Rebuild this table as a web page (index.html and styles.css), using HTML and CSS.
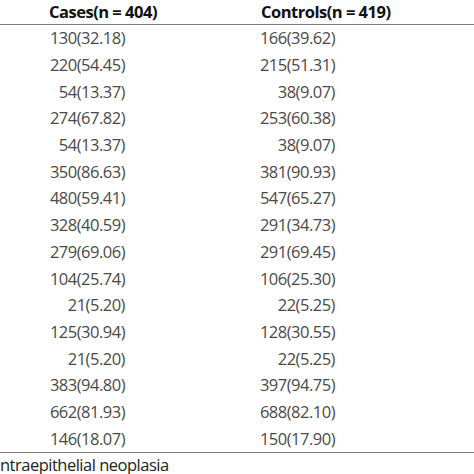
FILE: index.html
```html
<!DOCTYPE html>
<html>
<head>
<meta charset="utf-8">
<link rel="stylesheet" href="styles.css">
</head>
<body>
<div class="table">
  <div class="row head">
    <div class="h1">Cases(n = 404)</div>
    <div class="h2">Controls(n = 419)</div>
  </div>
  <div class="body">
    <div class="row"><div class="c1">130(32.18)</div><div class="c2">166(39.62)</div></div>
    <div class="row"><div class="c1">220(54.45)</div><div class="c2">215(51.31)</div></div>
    <div class="row"><div class="c1">54(13.37)</div><div class="c2">38(9.07)</div></div>
    <div class="row"><div class="c1">274(67.82)</div><div class="c2">253(60.38)</div></div>
    <div class="row"><div class="c1">54(13.37)</div><div class="c2">38(9.07)</div></div>
    <div class="row"><div class="c1">350(86.63)</div><div class="c2">381(90.93)</div></div>
    <div class="row"><div class="c1">480(59.41)</div><div class="c2">547(65.27)</div></div>
    <div class="row"><div class="c1">328(40.59)</div><div class="c2">291(34.73)</div></div>
    <div class="row"><div class="c1">279(69.06)</div><div class="c2">291(69.45)</div></div>
    <div class="row"><div class="c1">104(25.74)</div><div class="c2">106(25.30)</div></div>
    <div class="row"><div class="c1">21(5.20)</div><div class="c2">22(5.25)</div></div>
    <div class="row"><div class="c1">125(30.94)</div><div class="c2">128(30.55)</div></div>
    <div class="row"><div class="c1">21(5.20)</div><div class="c2">22(5.25)</div></div>
    <div class="row"><div class="c1">383(94.80)</div><div class="c2">397(94.75)</div></div>
    <div class="row"><div class="c1">662(81.93)</div><div class="c2">688(82.10)</div></div>
    <div class="row"><div class="c1">146(18.07)</div><div class="c2">150(17.90)</div></div>
  </div>
  <div class="foot">ntraepithelial neoplasia</div>
</div>
</body>
</html>
```
FILE: styles.css
```css
html, body {
  margin: 0;
  padding: 0;
  background: #fff;
}
body {
  font-family: "Open Sans", "Noto Sans", sans-serif;
  width: 474px;
  height: 474px;
  overflow: hidden;
}
.table {
  display: flex;
  flex-direction: column;
}
.row {
  display: grid;
  grid-template-columns: 125px 210px 1fr;
  align-items: center;
  height: 26.7px;
}
.head {
  border-bottom: 1.5px solid #7a7a7a;
  font-weight: 700;
  font-size: 16.5px;
  letter-spacing: -0.5px;
  color: #111;
  align-items: start;
  line-height: 22px;
  padding-top: 1px;
  box-sizing: border-box;
  height: 24.5px;
}
.h1 {
  padding-left: 49px;
  white-space: nowrap;
}
.h2 {
  padding-left: 136px;
  white-space: nowrap;
}
.body {
  border-bottom: 1.5px solid #7a7a7a;
}
.body .row {
  font-size: 16.5px;
  letter-spacing: -0.5px;
  color: #4a4a4a;
  line-height: 22px;
}
.c1, .c2 {
  text-align: right;
  white-space: nowrap;
  padding-top: 1px;
}
.foot {
  font-size: 16.5px;
  letter-spacing: -0.5px;
  color: #222;
  line-height: 22px;
  padding-top: 1px;
}
```
